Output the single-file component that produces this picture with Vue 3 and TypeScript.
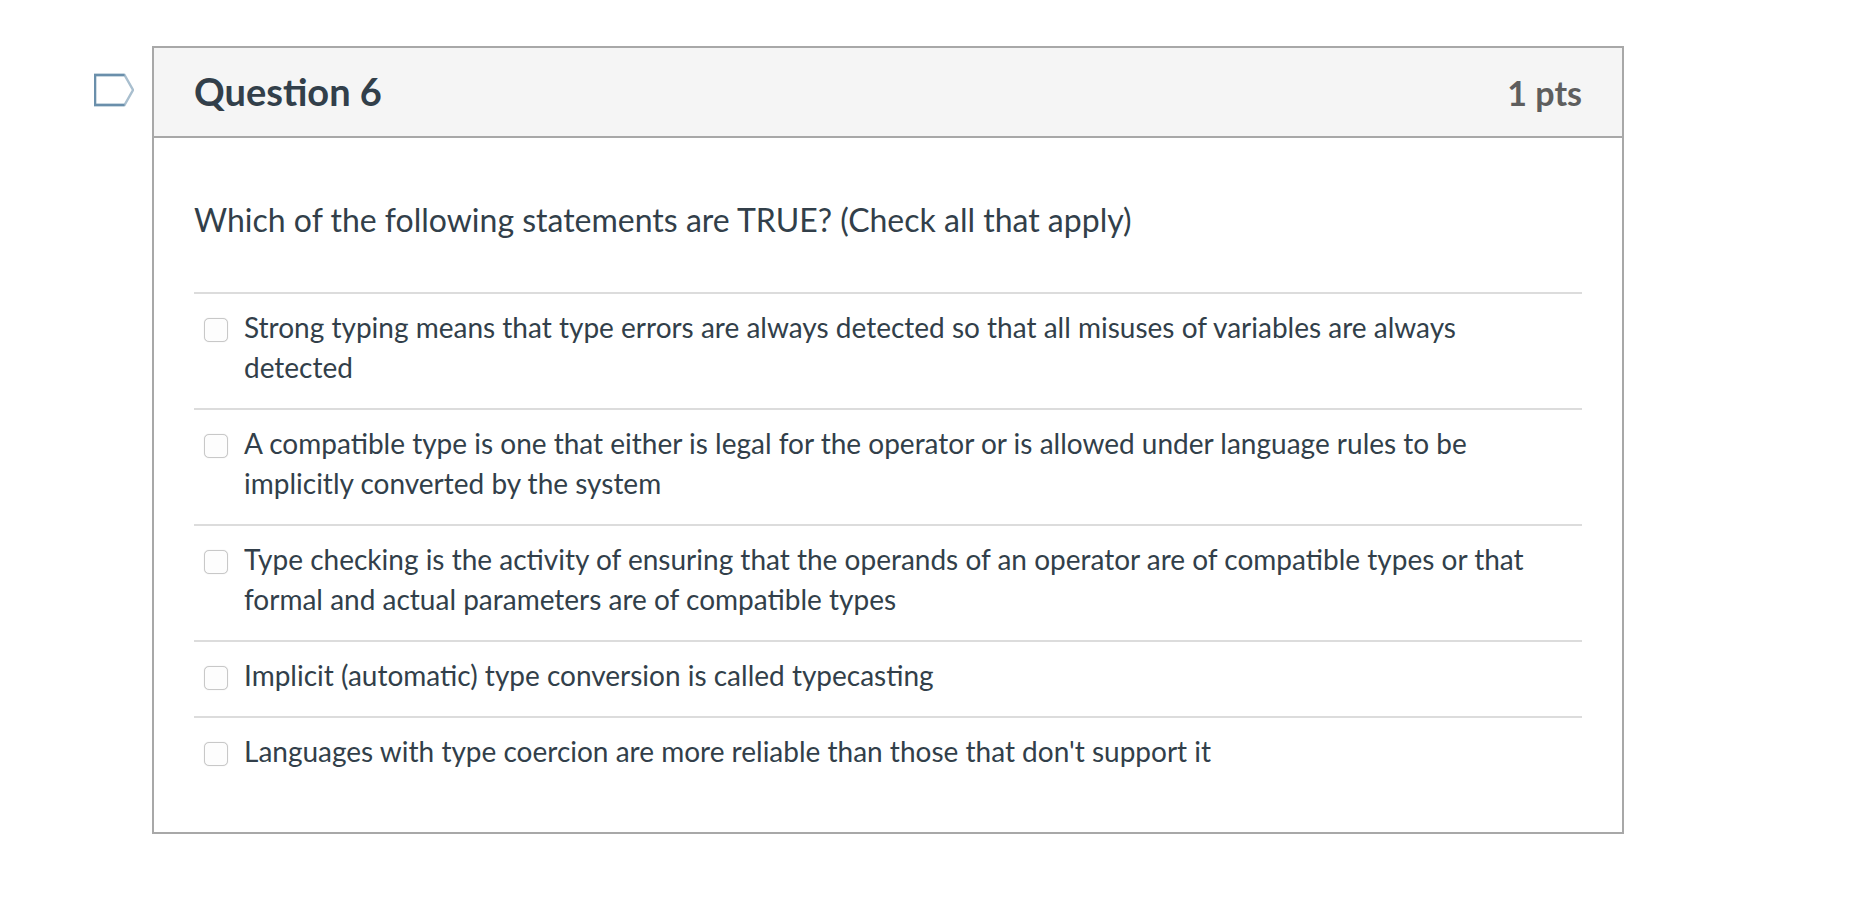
<script setup lang="ts">
const options: string[] = [
  'Strong typing means that type errors are always detected so that all misuses of variables are always detected',
  'A compatible type is one that either is legal for the operator or is allowed under language rules to be implicitly converted by the system',
  'Type checking is the activity of ensuring that the operands of an operator are of compatible types or that formal and actual parameters are of compatible types',
  'Implicit (automatic) type conversion is called typecasting',
  "Languages with type coercion are more reliable than those that don't support it",
]
</script>

<template>
  <div class="page">
    <div class="flag-col">
      <svg class="flag" width="40" height="34" viewBox="0 0 40 34">
        <path d="M1 2 H30.5 L39 17 L30.5 32 H1 Z" fill="#fff" stroke="#a9bfcf" stroke-width="2.4" />
        <path d="M30.5 2 H1 V32 H30.5" fill="none" stroke="#6a8fab" stroke-width="2.4" />
      </svg>
    </div>
    <section class="card">
      <header class="head">
        <h2 class="title">Question 6</h2>
        <span class="pts">1 pts</span>
      </header>
      <div class="body">
        <p class="prompt">Which of the following statements are TRUE? (Check all that apply)</p>
        <div class="answers">
          <label v-for="o in options" :key="o" class="answer">
            <span class="box"></span>
            <span class="text">{{ o }}</span>
          </label>
        </div>
      </div>
    </section>
  </div>
</template>

<style>
html, body { margin: 0; background: #fff; }
</style>

<style scoped>
.page {
  display: flex;
  align-items: flex-start;
  padding: 46px 0 0 94px;
  width: 1864px;
  height: 902px;
  box-sizing: border-box;
  font-family: Lato, "Liberation Sans", sans-serif;
  color: #323f4a;
  overflow: hidden;
}
.flag-col { width: 58px; padding-top: 27px; flex: none; }
.flag { display: block; }
.card {
  width: 1472px;
  box-sizing: border-box;
  border: 2px solid #a8a8a8;
}
.head {
  display: flex;
  justify-content: space-between;
  align-items: center;
  height: 88px;
  padding: 0 40px;
  background: #f5f5f5;
  border-bottom: 2px solid #a8a8a8;
}
.title { margin: -2px 0 0; font-size: 38px; font-weight: 700; }
.pts { font-size: 34px; font-weight: 700; color: #5e5e5e; }
.body { padding: 62px 40px 40px; }
.prompt { margin: 0 0 52px; font-size: 32px; line-height: 40px; }
.answer {
  display: flex;
  align-items: flex-start;
  border-top: 2px solid #dcdcdc;
  padding: 13px 0 21px;
  font-size: 28px;
  line-height: 40px;
}
.box {
  flex: none;
  width: 24px;
  height: 24px;
  margin: 11px 16px 0 10px;
  box-sizing: border-box;
  border: 1px solid #c8c8c8;
  border-radius: 5px;
  background: #fdfdfd;
  box-shadow: 0 0 1px #cfcfcf;
}
.text { flex: 1; padding-right: 40px; }
</style>
